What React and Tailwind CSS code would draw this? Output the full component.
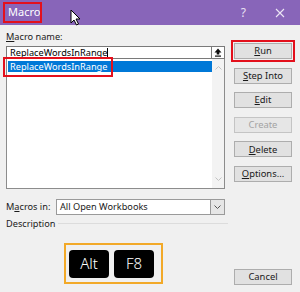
import React from 'react';

const FONT = { fontFamily: '"Noto Sans", "Open Sans", sans-serif' };

function Btn({ children, disabled }) {
  return (
    <div
      className={`h-[16px] flex items-center justify-center border text-[9.4px] leading-none ${
        disabled ? 'border-[#c4c4c4] bg-[#e6e6e6] text-[#a3a3a3]' : 'border-[#adadad] bg-[#e1e1e1] text-[#1a1a1a]'
      }`}
    >
      {children}
    </div>
  );
}

function Cursor() {
  return (
    <svg width="11" height="17" viewBox="0 0 11 17" className="absolute left-[70px] top-[9px]">
      <path d="M1 1 L1 14 L4 11 L6.5 16 L8.5 15 L6 10 L10 10 Z" fill="#fff" stroke="#000" strokeWidth="1" strokeLinejoin="round" />
    </svg>
  );
}

export default function App() {
  return (
    <div className="relative w-[300px] h-[292px] bg-[#f0f0f0] overflow-hidden flex flex-col" style={FONT}>
      {/* Title bar */}
      <div className="relative h-[25px] bg-[#8865b9] flex items-center text-white text-[11px] shrink-0">
        <span className="ml-[8px]">Macro</span>
        <span className="ml-auto mr-[29px] text-[12px] text-[#e8e0f2]">?</span>
        <svg width="10" height="10" viewBox="0 0 10 10" className="mr-[15px]">
          <path d="M1 1 L9 9 M9 1 L1 9" stroke="#ece6f4" strokeWidth="1.1" />
        </svg>
        <div className="absolute left-[3px] top-[2px] w-[39px] h-[21px] border-2 border-[#e3101c]" />
        <Cursor />
      </div>

      <div className="flex flex-1">
        {/* Left column */}
        <div className="relative w-[219px] ml-[6px] pt-[5px] text-[9.2px] text-[#1a1a1a] leading-none">
          <div className="h-[14px] flex items-center">
            <span><span className="underline">M</span>acro name:</span>
          </div>
          <div className="mt-[2px] h-[13px] flex">
            <div className="flex-1 bg-white border border-[#7a7a7a] flex items-center pl-[3px]">
              <span className="text-[#000]">ReplaceWordsInRange</span>
              <span className="w-px h-[10px] bg-black" />
            </div>
            <div className="w-[13px] bg-white border border-l-0 border-[#7a7a7a] flex items-center justify-center">
              <svg width="8" height="9" viewBox="0 0 8 9">
                <path d="M4 0.5 L7.5 4.5 L5.3 4.5 L5.3 6.5 L2.7 6.5 L2.7 4.5 L0.5 4.5 Z" fill="#111" />
                <rect x="1" y="7.5" width="6" height="1.2" fill="#111" />
              </svg>
            </div>
          </div>
          <div className="h-[130px] bg-white border border-[#8c8c8c] border-t-0 flex">
            <div className="flex-1 pt-[2px] pl-px">
              <div className="h-[11px] bg-[#0078d7] text-white flex items-center pl-[2px]">ReplaceWordsInRange</div>
            </div>
            <div className="w-[12px] bg-[#f3f3f3] flex flex-col items-center justify-between py-[7px]">
              <svg width="7" height="4" viewBox="0 0 7 4"><path d="M0.5 3.5 L3.5 0.5 L6.5 3.5" stroke="#c2c2c2" fill="none" /></svg>
              <svg width="7" height="4" viewBox="0 0 7 4"><path d="M0.5 0.5 L3.5 3.5 L6.5 0.5" stroke="#c2c2c2" fill="none" /></svg>
            </div>
          </div>
          <div className="absolute left-[-3px] top-[32px] w-[110px] h-[20px] border-2 border-[#e3101c]" />

          <div className="mt-[10px] h-[16px] flex items-center">
            <span className="w-[50px]">M<span className="underline">a</span>cros in:</span>
            <div className="flex-1 h-full bg-white border border-[#9a9a9a] flex items-center pl-[3px]">
              All Open Workbooks
            </div>
            <div className="w-[14px] h-full bg-[#e6e6e6] border border-l-0 border-[#9a9a9a] flex items-center justify-center">
              <svg width="7" height="4" viewBox="0 0 7 4"><path d="M0.5 0.5 L3.5 3.5 L6.5 0.5" stroke="#555" fill="none" /></svg>
            </div>
          </div>
          <div className="mt-[2px] h-[14px] flex items-center">
            <span>Description</span>
            <div className="flex-1 ml-[3px] mr-[-3px] h-px bg-[#dcdcdc] mt-[-2px]" />
          </div>

          <div className="mt-[12px] ml-[58px] w-[99px] h-[41px] border-2 border-[#f2a928] flex items-center gap-[5px] px-[3px]">
            <div className="w-[40px] h-[28px] bg-black rounded-[4px] flex items-center justify-center text-white text-[15px] font-light">Alt</div>
            <div className="w-[40px] h-[28px] bg-black rounded-[4px] flex items-center justify-center text-white text-[15px] font-light">F8</div>
          </div>
        </div>

        {/* Right column */}
        <div className="w-[58px] ml-[9px] pt-[18px] pb-[7px] flex flex-col gap-[8.6px]">
          <div className="ring-2 ring-[#e3101c] ring-offset-1 ring-offset-[#f0f0f0]">
            <Btn><span><span className="underline">R</span>un</span></Btn>
          </div>
          <Btn><span><span className="underline">S</span>tep Into</span></Btn>
          <Btn><span><span className="underline">E</span>dit</span></Btn>
          <Btn disabled>Create</Btn>
          <Btn><span><span className="underline">D</span>elete</span></Btn>
          <Btn><span><span className="underline">O</span>ptions...</span></Btn>
          <div className="mt-auto">
            <Btn>Cancel</Btn>
          </div>
        </div>
      </div>
    </div>
  );
}
